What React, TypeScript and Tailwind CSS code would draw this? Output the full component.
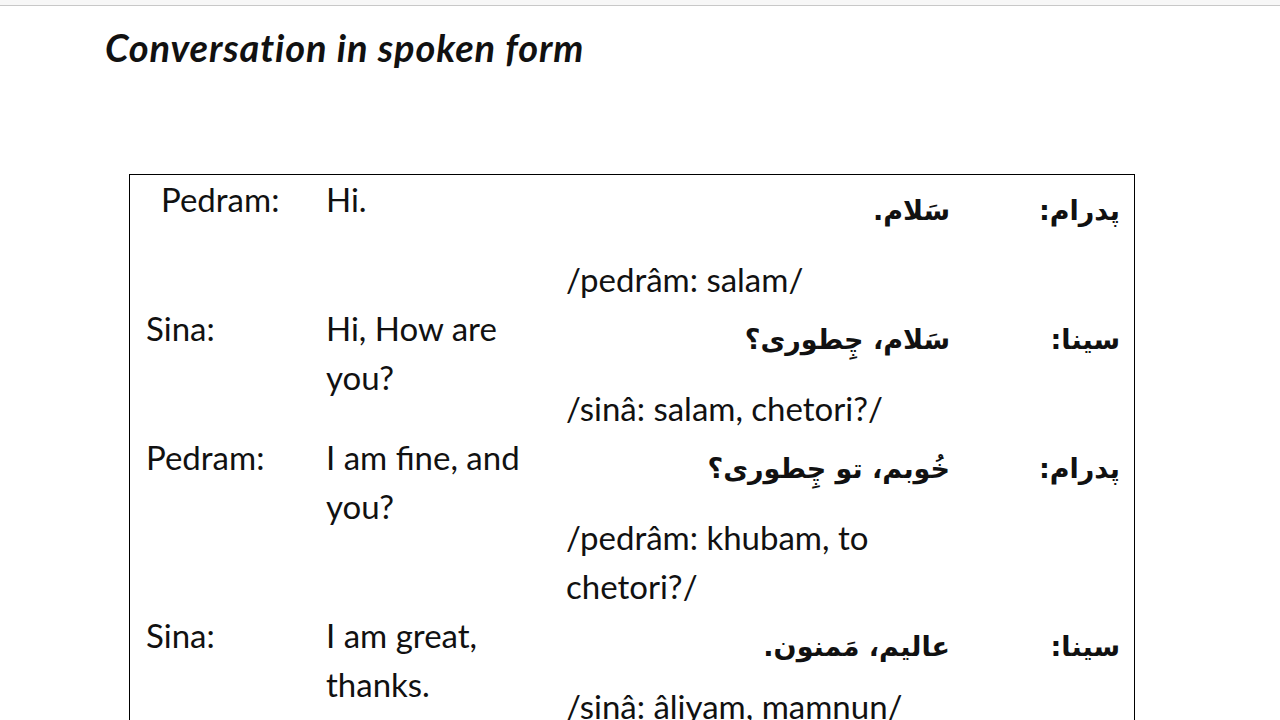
const EN = "font-['Lato','Open_Sans',sans-serif]"
const FA = "font-['DejaVu_Sans',sans-serif]"

type Line = { name: string; en: string; fa: string; tr: string; faName: string; indent?: boolean; tight?: boolean }

const LINES: Line[] = [
  { name: 'Pedram:', en: 'Hi.', fa: 'سَلام.', tr: '/pedrâm: salam/', faName: 'پدرام:', indent: true },
  { name: 'Sina:', en: 'Hi, How are you?', fa: 'سَلام، چِطوری؟', tr: '/sinâ: salam, chetori?/', faName: 'سینا:' },
  { name: 'Pedram:', en: 'I am fine, and you?', fa: 'خُوبم، تو چِطوری؟', tr: '/pedrâm: khubam, to chetori?/', faName: 'پدرام:' },
  { name: 'Sina:', en: 'I am great, thanks.', fa: 'عالیم، مَمنون.', tr: '/sinâ: âliyam, mamnun/', faName: 'سینا:', tight: true },
]

export default function App() {
  return (
    <div className={`min-h-screen bg-white text-[#111] ${EN}`}>
      <div className="h-[6px] bg-[#f7f7f7] border-b border-[#c8c8c8]" />
      <h1 className="pl-[105px] pt-[19px] text-[38px] leading-[44px] font-bold italic tracking-[0.9px]">Conversation in spoken form</h1>

      <div className="ml-[129px] mt-[105px] w-[1006px] border border-black">
        {LINES.map((l, i) => (
          <div key={i} className="flex text-[33px] leading-[49px]">
            <div className={`w-[181px] shrink-0 ${l.indent ? 'pl-[31px]' : 'pl-[16px]'}`}>{l.name}</div>
            <div className="w-[239px] shrink-0 pl-[15px] pr-[4px]">{l.en}</div>
            <div className="w-[400px] shrink-0 pl-[16px]">
              <div dir="rtl" className={`${l.tight ? 'h-[71px]' : 'h-[80px]'} text-right text-[27px] leading-[72px] font-bold ${FA}`}>{l.fa}</div>
              <div>{l.tr}</div>
            </div>
            <div dir="rtl" className={`flex-1 pl-[4px] pr-[14px] text-[27px] leading-[72px] font-bold ${FA}`}>{l.faName}</div>
          </div>
        ))}
      </div>
    </div>
  )
}
